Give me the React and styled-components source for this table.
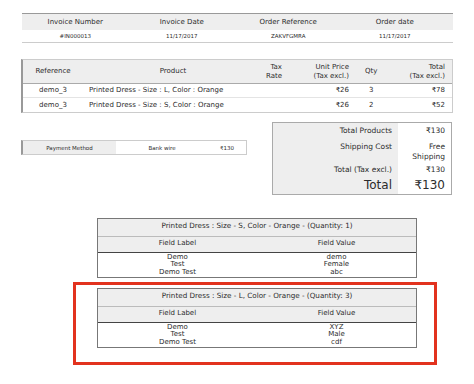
import React from 'react';
import styled, { createGlobalStyle } from 'styled-components';

const GlobalStyle = createGlobalStyle`
    body {
        margin: 0;
        background: #fff;
        color: #2c2c2c;
        font-family: 'DejaVu Sans', Verdana, sans-serif;
    }
`;

const Page = styled.div`
    width: 474px;
    height: 384px;
    box-sizing: border-box;
    padding: 13px 0 0 21px;
    overflow: hidden;
`;

// invoice info strip
const InfoTable = styled.div`
    width: 431px;
    margin-left: 1px;
    border-top: 1px solid #999;
    border-bottom: 1px solid #ccc;
`;

const InfoRow = styled.div`
    display: grid;
    grid-template-columns: repeat(4, 1fr);
    align-items: center;
    padding-right: 5px;
    height: ${p => p.$head ? '16px' : '12px'};
    background: ${p => p.$head ? '#eee' : '#fff'};
    font-size: ${p => p.$head ? '7px' : '5.5px'};
    text-align: center;
`;

// products
const ProductTable = styled.div`
    width: 432px;
    margin-top: 16px;
    box-sizing: border-box;
    border: 1px solid #ccc;
    border-left: 2px solid #999;
`;

const ProductRow = styled.div`
    display: grid;
    grid-template-columns: 60px 180px 24px 66px 40px 1fr;
    align-items: center;
    box-sizing: border-box;
    height: ${p => p.$head ? '24px' : '14px'};
    background: ${p => p.$head ? '#eee' : '#fff'};
    border-bottom: 1px solid ${p => p.$head ? '#aaa' : '#e4e4e4'};
    font-size: 7px;
    line-height: 9px;

    &:last-child {
        border-bottom: none;
    }
`;

const Cell = styled.div`
    text-align: ${p => p.$align || 'left'};
    padding: 0 ${p => p.$pr || 0}px 0 ${p => p.$pl || 0}px;
    white-space: nowrap;
`;

const Middle = styled.div`
    display: flex;
    justify-content: space-between;
    align-items: flex-start;
    width: 432px;
    margin-top: 9px;
`;

const Payment = styled.div`
    display: grid;
    grid-template-columns: 93px 92px 1fr;
    align-items: stretch;
    width: 226px;
    height: 15px;
    margin-top: 18px;
    box-sizing: border-box;
    border: 1px solid #ccc;
    border-left: 2px solid #999;
    font-size: 5.5px;
`;

const PayCell = styled.div`
    display: flex;
    align-items: center;
    justify-content: ${p => p.$end ? 'flex-end' : 'center'};
    padding-right: ${p => p.$end ? '12px' : '0'};
    background: ${p => p.$shade ? '#eee' : '#fff'};
`;

const Totals = styled.div`
    display: grid;
    grid-template-columns: 125px 1fr;
    width: 180px;
    margin-right: 1px;
    box-sizing: border-box;
    border: 1px solid #aaa;
    font-size: 7.5px;
    line-height: 10px;
`;

const TotalLabel = styled.div`
    background: #eee;
    text-align: right;
    padding: ${p => p.$pt || 3}px 6px 0 0;
    height: ${p => p.$h}px;
    box-sizing: border-box;
    font-size: ${p => p.$big ? '12px' : 'inherit'};
    line-height: ${p => p.$big ? '14px' : '10px'};
`;

const TotalValue = styled(TotalLabel)`
    background: #fff;
`;

// customization blocks
const CustomTable = styled.div`
    width: 320px;
    margin: ${p => p.$top}px 0 0 ${p => p.$left}px;
    box-sizing: border-box;
    border: 1px solid #777;
`;

const CustomTitle = styled.div`
    height: 18px;
    box-sizing: border-box;
    padding-top: 3px;
    background: #eee;
    border-bottom: 1px solid #bbb;
    text-align: center;
    font-size: 7.2px;
    line-height: 8px;
`;

const CustomHead = styled.div`
    display: grid;
    grid-template-columns: 1fr 1fr;
    height: 16px;
    box-sizing: border-box;
    padding-top: 2px;
    background: #eee;
    border-bottom: 1.5px solid #444;
    text-align: center;
    font-size: 7px;
    line-height: 9px;
`;

const CustomBody = styled.div`
    display: grid;
    grid-template-columns: 1fr 1fr;
    height: 24px;
    padding-top: 0.5px;
    box-sizing: border-box;
    text-align: center;
    font-size: 7px;
    line-height: 7.9px;
`;

const Highlight = styled.div`
    width: 364px;
    height: 83px;
    margin: 4px 0 0 52px;
    box-sizing: border-box;
    border: 3px solid #e2321e;
    padding: 3px 17px 0 21px;
`;

const R = '\u20B9';

const products = [
    { ref: 'demo_3', name: 'Printed Dress - Size : L, Color : Orange', price: `${R}26`, qty: 3, total: `${R}78` },
    { ref: 'demo_3', name: 'Printed Dress - Size : S, Color : Orange', price: `${R}26`, qty: 2, total: `${R}52` },
];

const Custom = ({ title, values, top, left }) => (
    <CustomTable $top={top} $left={left}>
        <CustomTitle>{title}</CustomTitle>
        <CustomHead>
            <div>Field Label</div>
            <div>Field Value</div>
        </CustomHead>
        <CustomBody>
            <div>Demo<br />Test<br />Demo Test</div>
            <div>{values.map((v, i) => <React.Fragment key={i}>{v}<br /></React.Fragment>)}</div>
        </CustomBody>
    </CustomTable>
);

const App = () => {
    return (
        <Page>
            <GlobalStyle />

            <InfoTable>
                <InfoRow $head>
                    <div>Invoice Number</div>
                    <div>Invoice Date</div>
                    <div>Order Reference</div>
                    <div>Order date</div>
                </InfoRow>
                <InfoRow>
                    <div>#IN000013</div>
                    <div>11/17/2017</div>
                    <div>ZAKVFGMRA</div>
                    <div>11/17/2017</div>
                </InfoRow>
            </InfoTable>

            <ProductTable>
                <ProductRow $head>
                    <Cell $align="center">Reference</Cell>
                    <Cell $align="center">Product</Cell>
                    <Cell $align="right" $pr={5}>Tax<br />Rate</Cell>
                    <Cell $align="right" $pr={4}>Unit Price<br />(Tax excl.)</Cell>
                    <Cell $pl={12}>Qty</Cell>
                    <Cell $align="right" $pr={7}>Total<br />(Tax excl.)</Cell>
                </ProductRow>
                {products.map((p, i) => (
                    <ProductRow key={i}>
                        <Cell $align="center">{p.ref}</Cell>
                        <Cell $pl={6}>{p.name}</Cell>
                        <Cell />
                        <Cell $align="right" $pr={4}>{p.price}</Cell>
                        <Cell $pl={16}>{p.qty}</Cell>
                        <Cell $align="right" $pr={7}>{p.total}</Cell>
                    </ProductRow>
                ))}
            </ProductTable>

            <Middle>
                <Payment>
                    <PayCell $shade>Payment Method</PayCell>
                    <PayCell>Bank wire</PayCell>
                    <PayCell $end>{R}130</PayCell>
                </Payment>

                <Totals>
                    <TotalLabel $h={16}>Total Products</TotalLabel>
                    <TotalValue $h={16}>{R}130</TotalValue>
                    <TotalLabel $h={24}>Shipping Cost</TotalLabel>
                    <TotalValue $h={24}>Free<br />Shipping</TotalValue>
                    <TotalLabel $h={14} $pt={2}>Total (Tax excl.)</TotalLabel>
                    <TotalValue $h={14} $pt={2}>{R}130</TotalValue>
                    <TotalLabel $h={17} $pt={1} $big>Total</TotalLabel>
                    <TotalValue $h={17} $pt={1} $big>{R}130</TotalValue>
                </Totals>
            </Middle>

            <Custom
                top={23}
                left={76}
                title="Printed Dress : Size - S, Color - Orange - (Quantity: 1)"
                values={['demo', 'Female', 'abc']}
            />

            <Highlight>
                <Custom
                    top={0}
                    left={0}
                    title="Printed Dress : Size - L, Color - Orange - (Quantity: 3)"
                    values={['XYZ', 'Male', 'cdf']}
                />
            </Highlight>
        </Page>
    );
};

export default App;
